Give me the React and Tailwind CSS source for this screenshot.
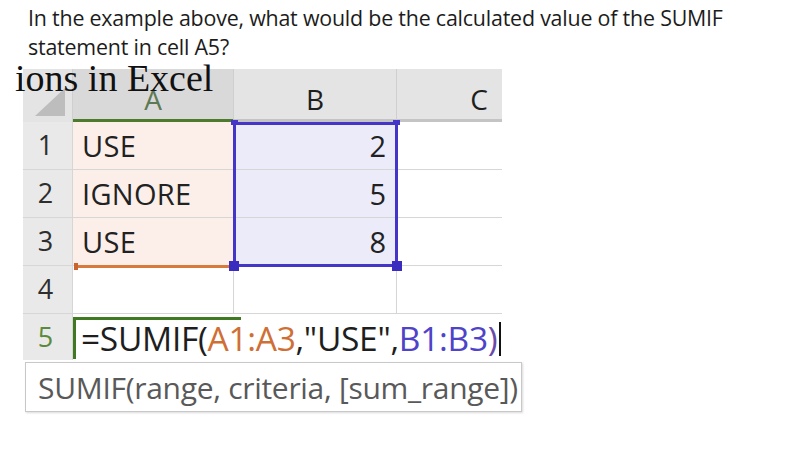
import React from "react";

const font = { fontFamily: '"Open Sans", "Noto Sans", sans-serif' };

function Cell({ className = "", children }) {
  return (
    <div className={`border-b border-r border-[#d6d6d6] flex items-center ${className}`}>
      {children}
    </div>
  );
}

function RowNum({ n, className = "" }) {
  return (
    <Cell className={`justify-center bg-[#e9e9e9] text-[27px] text-[#2e2e2e] pr-[4px] ${className}`}>
      {n}
    </Cell>
  );
}

export default function App() {
  const rows = [
    { n: 1, a: "USE", b: "2" },
    { n: 2, a: "IGNORE", b: "5" },
    { n: 3, a: "USE", b: "8" },
  ];

  return (
    <div className="w-[785px] h-[460px] bg-white overflow-hidden relative" style={font}>
      <div className="pl-[28px] pt-[3px] text-[21.4px] leading-[29px] tracking-[-0.2px] text-[#1c1c1c]">
        <p>In the example above, what would be the calculated value of the SUMIF</p>
        <p>statement in cell A5?</p>
      </div>

      <div className="relative ml-[23px] mt-[8px] w-[480px]">
        <div className="grid grid-cols-[50px_161px_163px_105px] grid-rows-[53px_48px_48px_48px_48px_46px]">
          {/* header row */}
          <div className="bg-[#e4e4e4] border-r border-[#cfcfcf] relative">
            <svg className="absolute left-[12px] top-[19px]" width="30" height="28" viewBox="0 0 30 28">
              <polygon points="30,0 30,28 0,28" fill="#bdbdbd" />
            </svg>
          </div>
          <div className="bg-[#d9d9d9] border-r border-[#cfcfcf] border-b-[3px] border-b-[#4d7b2b] flex items-end justify-center pb-[6px] text-[28px] leading-none text-[#5e7a54]">
            A
          </div>
          <div className="bg-[#e4e4e4] border-r border-[#cfcfcf] border-b-[3px] border-b-[#c4c4c4] flex items-end justify-center pb-[6px] text-[28px] leading-none text-[#1e1e1e]">
            B
          </div>
          <div className="bg-[#e4e4e4] border-b-[3px] border-b-[#c4c4c4] flex items-end justify-end pr-[14px] pb-[6px] text-[28px] leading-none text-[#1e1e1e]">
            C
          </div>

          {rows.map((r) => (
            <React.Fragment key={r.n}>
              <RowNum n={r.n} />
              <Cell className="bg-[#fcefe9] pl-[9px] text-[29px] tracking-[0.3px] text-[#222]">{r.a}</Cell>
              <Cell className="bg-[#ebebfa] justify-end pr-[10px] text-[29px] text-[#222]">{r.b}</Cell>
              <Cell className="bg-white border-r-0" />
            </React.Fragment>
          ))}

          <RowNum n={4} />
          <Cell className="bg-white" />
          <Cell className="bg-white" />
          <Cell className="bg-white border-r-0" />

          <RowNum n={5} className="bg-[#dcdcdc] text-[#5c8a3c] border-b-0" />
          <div className="col-span-3 bg-white" />
        </div>

        {/* orange criteria range bottom */}
        <div className="absolute left-[52px] top-[196px] w-[158px] h-[3px] bg-[#d97a3d]" />
        <div className="absolute left-[51px] top-[194px] w-[4px] h-[7px] bg-[#c9642e]" />

        {/* blue sum range */}
        <div className="absolute left-[210px] top-[53px] w-[165px] h-[145px] border-[3px] border-[#4534c8]" />
        <div className="absolute left-[208px] top-[51px] w-[7px] h-[5px] bg-[#4534c8]" />
        <div className="absolute left-[370px] top-[51px] w-[7px] h-[5px] bg-[#4534c8]" />
        <div className="absolute left-[206px] top-[192px] w-[10px] h-[10px] bg-[#3b2cc0]" />
        <div className="absolute left-[369px] top-[192px] w-[10px] h-[10px] bg-[#3b2cc0]" />

        {/* active cell A5 */}
        <div className="absolute left-[50px] top-[248px] w-[168px] h-[3px] bg-[#3f7a22]" />
        <div className="absolute left-[50px] top-[248px] w-[3px] h-[42px] bg-[#3f7a22]" />

        {/* formula */}
        <div className="absolute left-[58px] top-[250px] h-[40px] flex items-center text-[33.5px] leading-none tracking-[-0.3px] text-[#1e1e1e] whitespace-nowrap">
          <span>=SUMIF(</span>
          <span className="text-[#cf6f36]">A1:A3</span>
          <span>,"USE",</span>
          <span className="text-[#4f43c9]">B1:B3</span>
          <span className="text-[#6a4aa8]">)</span>
          <span className="ml-[2px] w-[2px] h-[34px] bg-[#111]" />
        </div>

        {/* tooltip */}
        <div className="absolute left-[2px] top-[293px] w-[497px] h-[50px] bg-white border border-[#c8c8c8] shadow-[1px_1px_2px_rgba(0,0,0,0.15)] flex items-center pl-[12px] text-[30px] tracking-[-0.3px] text-[#595959] whitespace-nowrap">
          SUMIF(range, criteria, [sum_range])
        </div>

        {/* overlapping title fragment */}
        <div
          className="absolute left-[-8px] top-[-10px] text-[38px] leading-none text-[#111]"
          style={{ fontFamily: '"Liberation Serif", "DejaVu Serif", serif' }}
        >
          ions in Excel
        </div>
      </div>
    </div>
  );
}
